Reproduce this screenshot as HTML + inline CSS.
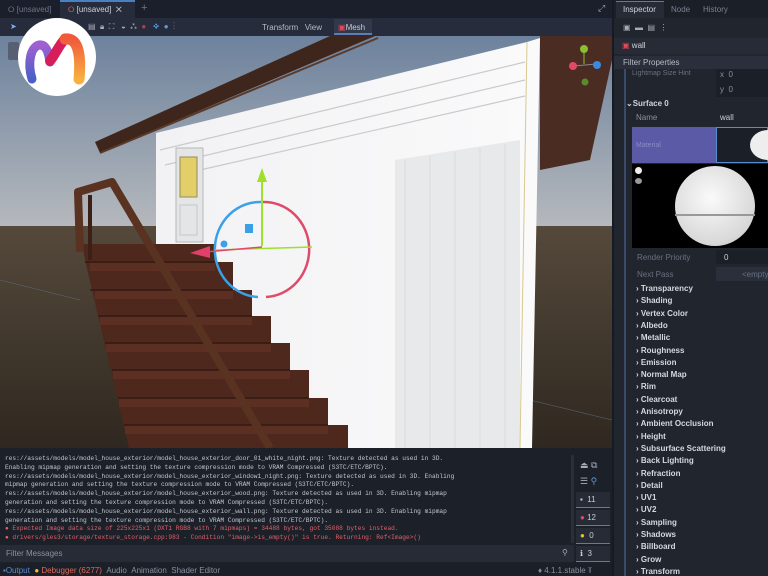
<!DOCTYPE html>
<html><head><meta charset="utf-8"><style>
*{margin:0;padding:0;box-sizing:border-box}
body{width:768px;height:576px;overflow:hidden;background:#1d2230;font-family:"Liberation Sans",sans-serif;position:relative}
.abs{position:absolute}
.con{font-family:"Liberation Mono",monospace;font-size:6.2px;color:#c4c7cc;line-height:8.8px;white-space:pre}
.insp div.it{position:absolute;left:636px;font-size:8px;font-weight:bold;color:#d4d8e0}
</style></head><body>
<div class="abs" style="left:0;top:0;width:612px;height:18px;background:#1b1f2b"></div>
<div class="abs" style="left:60px;top:0;width:75px;height:18px;background:#262c3b;border-top:2px solid #4a7fc1"></div>
<div class="abs" style="left:8px;top:5px;font-size:8px;color:#6f7584">⭘ [unsaved]</div>
<div class="abs" style="left:68px;top:5px;font-size:8px;color:#d0d3da"><span style="color:#e05a5a">⭘</span> [unsaved] &nbsp;✕</div>
<div class="abs" style="left:141px;top:2px;font-size:11px;color:#6f7584">+</div>
<div class="abs" style="left:598px;top:3px;font-size:9px;color:#9aa">⤢</div>
<div class="abs" style="left:0;top:18px;width:612px;height:18px;background:#262c3b"></div>
<div class="abs" style="left:10px;top:22px;font-size:8px;color:#7fb0e8">➤</div>
<div class="abs" style="left:88px;top:22px;font-size:8px;color:#aab">▤ &nbsp;🔒︎ &nbsp;⛶ &nbsp;&nbsp;◒ &nbsp;⁂ &nbsp;<span style="color:#a44">●</span> &nbsp;&nbsp;<span style="color:#5b9be0">✥ &nbsp;●</span> &nbsp;⋮</div>
<div class="abs" style="left:262px;top:23px;font-size:8px;color:#b7bcc6">Transform &nbsp;&nbsp;View</div>
<div class="abs" style="left:334px;top:19px;width:38px;height:16px;background:#30384a;border-bottom:2px solid #5a7fb8"></div>
<div class="abs" style="left:338px;top:23px;font-size:8px;color:#c8ccd4"><span style="color:#e04a5a">▣</span>Mesh</div>
<svg class="abs" style="left:0;top:36px" width="612" height="412" viewBox="0 36 612 412">
<defs>
<linearGradient id="sky" x1="0" y1="0" x2="0" y2="1"><stop offset="0" stop-color="#6d829d"/><stop offset="1" stop-color="#b6b9bd"/></linearGradient>
<linearGradient id="gr" x1="0" y1="0" x2="0" y2="1"><stop offset="0" stop-color="#55493b"/><stop offset="1" stop-color="#2f2820"/></linearGradient>
<linearGradient id="wall" x1="0" y1="0" x2="1" y2="0"><stop offset="0" stop-color="#f2f2f4"/><stop offset="1" stop-color="#fafafb"/></linearGradient>
</defs>
<rect x="0" y="36" width="612" height="192" fill="url(#sky)"/>
<rect x="0" y="226" width="612" height="222" fill="url(#gr)"/>
<line x1="0" y1="280" x2="80" y2="300" stroke="#5a6a7a" stroke-width="0.6"/>
<line x1="530" y1="400" x2="612" y2="420" stroke="#5a6a7a" stroke-width="0.6"/>
<polygon points="156,133 527,42 540,38 532,448 156,448" fill="url(#wall)"/>
<polygon points="395,160 520,140 520,448 395,448" fill="#e8e9eb"/>
<g stroke="#dadbde" stroke-width="1"><line x1="405" y1="160" x2="405" y2="448"/><line x1="430" y1="156" x2="430" y2="448"/><line x1="455" y1="152" x2="455" y2="448"/><line x1="480" y1="148" x2="480" y2="448"/><line x1="505" y1="144" x2="505" y2="448"/></g>
<g stroke="#c9cacd" stroke-width="1.2"><line x1="160" y1="150" x2="525" y2="62"/><line x1="165" y1="165" x2="525" y2="80"/><line x1="200" y1="170" x2="525" y2="96"/></g>
<line x1="527" y1="42" x2="520" y2="448" stroke="#d8c890" stroke-width="1"/>
<polygon points="540,36 612,36 612,60 590,160 540,170" fill="#4a2c22"/>
<polygon points="95,142 330,36 375,36 100,153" fill="#3e261c"/>
<line x1="100" y1="153" x2="378" y2="38" stroke="#5a3a2a" stroke-width="2"/>
<rect x="176" y="148" width="27" height="94" fill="#e4e5e7" stroke="#aaa" stroke-width="0.8"/>
<rect x="180" y="157" width="17" height="40" fill="#e3cf6a" stroke="#9a8a5a"/>
<rect x="180" y="205" width="17" height="30" fill="none" stroke="#bbb" stroke-width="0.7"/>
<polygon points="82,244 215,244 215,262 233,262 233,290 252,290 252,316 271,316 271,343 290,343 290,370 309,370 309,398 328,398 328,425 348,425 348,448 129,448 85,260" fill="#4e271d"/>
<g stroke="#331a13" stroke-width="1.5"><line x1="85" y1="262" x2="215" y2="262"/><line x1="90" y1="290" x2="233" y2="290"/><line x1="98" y1="316" x2="252" y2="316"/><line x1="105" y1="343" x2="271" y2="343"/><line x1="112" y1="370" x2="290" y2="370"/><line x1="118" y1="398" x2="309" y2="398"/><line x1="124" y1="425" x2="328" y2="425"/></g>
<g fill="#5c2f23"><rect x="90" y="263" width="125" height="8"/><rect x="95" y="291" width="138" height="8"/><rect x="100" y="317" width="152" height="8"/><rect x="106" y="344" width="165" height="8"/><rect x="113" y="371" width="177" height="8"/><rect x="119" y="399" width="190" height="8"/><rect x="125" y="426" width="203" height="8"/></g>
<path d="M80,252 L78,192 L112,182 L270,448" fill="none" stroke="#5a3222" stroke-width="8" stroke-linejoin="round"/>
<path d="M90,260 L90,195" stroke="#3a2016" stroke-width="4"/>
<path d="M262,202 A38,40 0 0 0 258,297" fill="none" stroke="#3aa0e8" stroke-width="2.5"/>
<path d="M262,202 A38,40 0 0 1 266,297" fill="none" stroke="#e04a6a" stroke-width="2.5"/>
<line x1="262" y1="246" x2="262" y2="178" stroke="#9ee02a" stroke-width="2"/>
<polygon points="262,168 257,182 267,182" fill="#9ee02a"/>
<line x1="215" y1="250" x2="312" y2="247" stroke="#9ee02a" stroke-width="1.5"/>
<line x1="205" y1="252" x2="262" y2="247" stroke="#e04a6a" stroke-width="1.5"/>
<polygon points="190,253 210,246 210,258" fill="#e0406a"/>
<circle cx="224" cy="244" r="3.5" fill="#3aa0e8"/>
<rect x="245" y="224" width="8" height="9" fill="#3aa0e8"/>
<line x1="584" y1="50" x2="584" y2="64" stroke="#8ac030"/><line x1="574" y1="66" x2="596" y2="64" stroke="#888"/>
<circle cx="584" cy="49" r="4" fill="#8ac030"/><circle cx="573" cy="66" r="4" fill="#e04a6a"/><circle cx="597" cy="65" r="4" fill="#3a8ae0"/><circle cx="585" cy="82" r="3.5" fill="#5a8a2a"/>
<rect x="8" y="42" width="11" height="18" rx="2" fill="#566072"/>
</svg>
<div class="abs" style="left:612px;top:0;width:2px;height:576px;background:#161a22"></div>
<svg class="abs" style="left:17px;top:17px" width="80" height="80" viewBox="0 0 80 80">
<circle cx="40" cy="40" r="39" fill="#fff"/>
<defs><linearGradient id="lg1" x1="0" y1="0" x2="0" y2="1"><stop offset="0" stop-color="#a060d0"/><stop offset="1" stop-color="#4a60c8"/></linearGradient>
<linearGradient id="lg2" x1="0" y1="0" x2="0" y2="1"><stop offset="0" stop-color="#f05a3a"/><stop offset="1" stop-color="#f8b040"/></linearGradient></defs>
<path d="M15,62 C10,45 14,30 22,28 C30,27 32,38 33,45" fill="none" stroke="url(#lg1)" stroke-width="9" stroke-linecap="round"/>
<path d="M33,44 C38,38 42,28 48,22" fill="none" stroke="#d81e5a" stroke-width="10" stroke-linecap="round"/>
<path d="M48,22 C62,20 64,40 62,62" fill="none" stroke="url(#lg2)" stroke-width="11" stroke-linecap="round"/>
</svg>
<div class="insp">
<div class="abs" style="left:614px;top:0;width:154px;height:576px;background:#21252e"></div>
<div class="abs" style="left:614px;top:0;width:154px;height:18px;background:#1b1f28"></div>
<div class="abs" style="left:616px;top:1px;width:48px;height:17px;background:#262b36;border-top:1px solid #4a7fc1"></div>
<div class="abs" style="left:623px;top:5px;font-size:8px;color:#d0d4dc">Inspector</div>
<div class="abs" style="left:671px;top:5px;font-size:8px;color:#7a8090">Node</div>
<div class="abs" style="left:703px;top:5px;font-size:8px;color:#7a8090">History</div>
<div class="abs" style="left:623px;top:23px;font-size:8px;color:#aab">▣ &nbsp;▬ &nbsp;▤ &nbsp;⋮</div>
<div class="abs" style="left:614px;top:38px;width:154px;height:16px;background:#262b36"></div>
<div class="abs" style="left:622px;top:41px;font-size:8px;color:#d0d4dc"><span style="color:#e04a5a">▣</span> wall</div>
<div class="abs" style="left:614px;top:56px;width:154px;height:13px;background:#2a2f3b"></div>
<div class="abs" style="left:623px;top:58px;font-size:8px;color:#b8bcc6">Filter Properties</div>
<div class="abs" style="left:624px;top:69px;width:2px;height:507px;background:#3a4a6a"></div>
<div class="abs" style="left:716px;top:69px;width:52px;height:28px;background:#1b1f28"></div>
<div class="abs" style="left:720px;top:70px;font-size:8px;color:#8a90a0">x &nbsp;0</div>
<div class="abs" style="left:720px;top:85px;font-size:8px;color:#8a90a0">y &nbsp;0</div>
<div class="abs" style="left:632px;top:70px;font-size:7px;color:#6a7080">Lightmap Size Hint</div>
<div class="abs" style="left:626px;top:99px;font-size:8px;font-weight:bold;color:#d0d4dc">⌄Surface 0</div>
<div class="abs" style="left:636px;top:113px;font-size:8px;color:#8a90a0">Name</div>
<div class="abs" style="left:720px;top:113px;font-size:8px;color:#c8ccd4">wall</div>
<div class="abs" style="left:632px;top:127px;width:84px;height:36px;background:#5a5aa6"></div>
<div class="abs" style="left:636px;top:142px;font-size:7px;color:#8a8ac8">Material</div>
<div class="abs" style="left:716px;top:127px;width:52px;height:36px;background:#1b1f28;border:1px solid #5a8ad0"></div>
<div class="abs" style="left:750px;top:130px;width:36px;height:30px;border-radius:50%;background:#eee"></div>
<div class="abs" style="left:632px;top:164px;width:136px;height:84px;background:#000;overflow:hidden">
<div class="abs" style="left:43px;top:2px;width:80px;height:80px;border-radius:50%;background:radial-gradient(circle at 45% 40%,#fafafa,#d8d8d8 70%,#aaa);"></div>
<div class="abs" style="left:43px;top:50px;width:80px;height:2px;background:#999"></div>
<div class="abs" style="left:3px;top:3px;width:7px;height:7px;border-radius:50%;background:#eee"></div>
<div class="abs" style="left:3px;top:14px;width:7px;height:6px;border-radius:50%;background:#999"></div>
</div>
<div class="abs" style="left:637px;top:253px;font-size:8px;color:#6a7080">Render Priority</div>
<div class="abs" style="left:716px;top:250px;width:52px;height:14px;background:#1b1f28"></div>
<div class="abs" style="left:724px;top:253px;font-size:8px;color:#c8ccd4">0</div>
<div class="abs" style="left:637px;top:270px;font-size:8px;color:#6a7080">Next Pass</div>
<div class="abs" style="left:716px;top:267px;width:52px;height:14px;background:#2a2f3b"></div>
<div class="abs" style="left:742px;top:270px;font-size:8px;color:#6a7080">&lt;empty</div>
<div class="it" style="top:284px">› Transparency</div>
<div class="it" style="top:296.3px">› Shading</div>
<div class="it" style="top:308.6px">› Vertex Color</div>
<div class="it" style="top:320.9px">› Albedo</div>
<div class="it" style="top:333.2px">› Metallic</div>
<div class="it" style="top:345.5px">› Roughness</div>
<div class="it" style="top:357.8px">› Emission</div>
<div class="it" style="top:370.1px">› Normal Map</div>
<div class="it" style="top:382.4px">› Rim</div>
<div class="it" style="top:394.7px">› Clearcoat</div>
<div class="it" style="top:407px">› Anisotropy</div>
<div class="it" style="top:419.3px">› Ambient Occlusion</div>
<div class="it" style="top:431.6px">› Height</div>
<div class="it" style="top:443.9px">› Subsurface Scattering</div>
<div class="it" style="top:456.2px">› Back Lighting</div>
<div class="it" style="top:468.5px">› Refraction</div>
<div class="it" style="top:480.8px">› Detail</div>
<div class="it" style="top:493.1px">› UV1</div>
<div class="it" style="top:505.4px">› UV2</div>
<div class="it" style="top:517.7px">› Sampling</div>
<div class="it" style="top:530px">› Shadows</div>
<div class="it" style="top:542.3px">› Billboard</div>
<div class="it" style="top:554.6px">› Grow</div>
<div class="it" style="top:566.9px">› Transform</div>
</div>
<div class="abs" style="left:0;top:448px;width:612px;height:128px;background:#1c2029"></div>
<div class="abs con" style="left:5px;top:455px">res://assets/models/model_house_exterior/model_house_exterior_door_01_white_night.png: Texture detected as used in 3D.
Enabling mipmap generation and setting the texture compression mode to VRAM Compressed (S3TC/ETC/BPTC).
res://assets/models/model_house_exterior/model_house_exterior_window1_night.png: Texture detected as used in 3D. Enabling
mipmap generation and setting the texture compression mode to VRAM Compressed (S3TC/ETC/BPTC).
res://assets/models/model_house_exterior/model_house_exterior_wood.png: Texture detected as used in 3D. Enabling mipmap
generation and setting the texture compression mode to VRAM Compressed (S3TC/ETC/BPTC).
res://assets/models/model_house_exterior/model_house_exterior_wall.png: Texture detected as used in 3D. Enabling mipmap
generation and setting the texture compression mode to VRAM Compressed (S3TC/ETC/BPTC).
<span style="color:#e0606a">● Expected Image data size of 225x225x1 (DXT1 RGB8 with 7 mipmaps) = 34488 bytes, got 35088 bytes instead.
● drivers/gles3/storage/texture_storage.cpp:983 - Condition "image->is_empty()" is true. Returning: Ref&lt;Image&gt;()</span></div>
<div class="abs" style="left:571px;top:455px;width:3px;height:88px;background:#2a2f3b"></div>
<div class="abs" style="left:0;top:545px;width:574px;height:17px;background:#262b36"></div>
<div class="abs" style="left:6px;top:549px;font-size:8px;color:#8a90a0">Filter Messages</div>
<div class="abs" style="left:562px;top:548px;font-size:8px;color:#aab">⚲</div>
<div class="abs" style="left:580px;top:457px;font-size:9px;color:#aab;line-height:16px">⏏ ⧉<br>☰ <span style="color:#5a9ae0">⚲</span></div>
<div class="abs" style="left:576px;top:492px;width:34px;height:16px;background:#262b36;border-bottom:1px solid #4a7fc1"></div>
<div class="abs" style="left:580px;top:495px;font-size:8px;color:#c8ccd4">▪ &nbsp;11</div>
<div class="abs" style="left:576px;top:510px;width:34px;height:16px;background:#262b36;border-bottom:1px solid #4a7fc1"></div>
<div class="abs" style="left:580px;top:513px;font-size:8px;color:#c8ccd4"><span style="color:#e04a5a">●</span> 12</div>
<div class="abs" style="left:576px;top:528px;width:34px;height:16px;background:#262b36;border-bottom:1px solid #4a7fc1"></div>
<div class="abs" style="left:580px;top:531px;font-size:8px;color:#c8ccd4"><span style="color:#e8c030">●</span> &nbsp;0</div>
<div class="abs" style="left:576px;top:546px;width:34px;height:16px;background:#262b36;border-bottom:1px solid #4a7fc1"></div>
<div class="abs" style="left:580px;top:549px;font-size:8px;color:#c8ccd4">ℹ &nbsp;3</div>
<div class="abs" style="left:0;top:564px;width:612px;height:12px;background:#1b1f28"></div>
<div class="abs" style="left:3px;top:566px;font-size:8px;color:#8a90a0"><span style="color:#5a8ad0">▪Output</span> &nbsp;<span style="color:#e8c030">●</span> <span style="color:#e06a5a">Debugger (6277)</span> &nbsp;Audio &nbsp;Animation &nbsp;Shader Editor</div>
<div class="abs" style="left:538px;top:566px;font-size:8px;color:#8a90a0">♦ 4.1.1.stable ⫪</div>
</body></html>
